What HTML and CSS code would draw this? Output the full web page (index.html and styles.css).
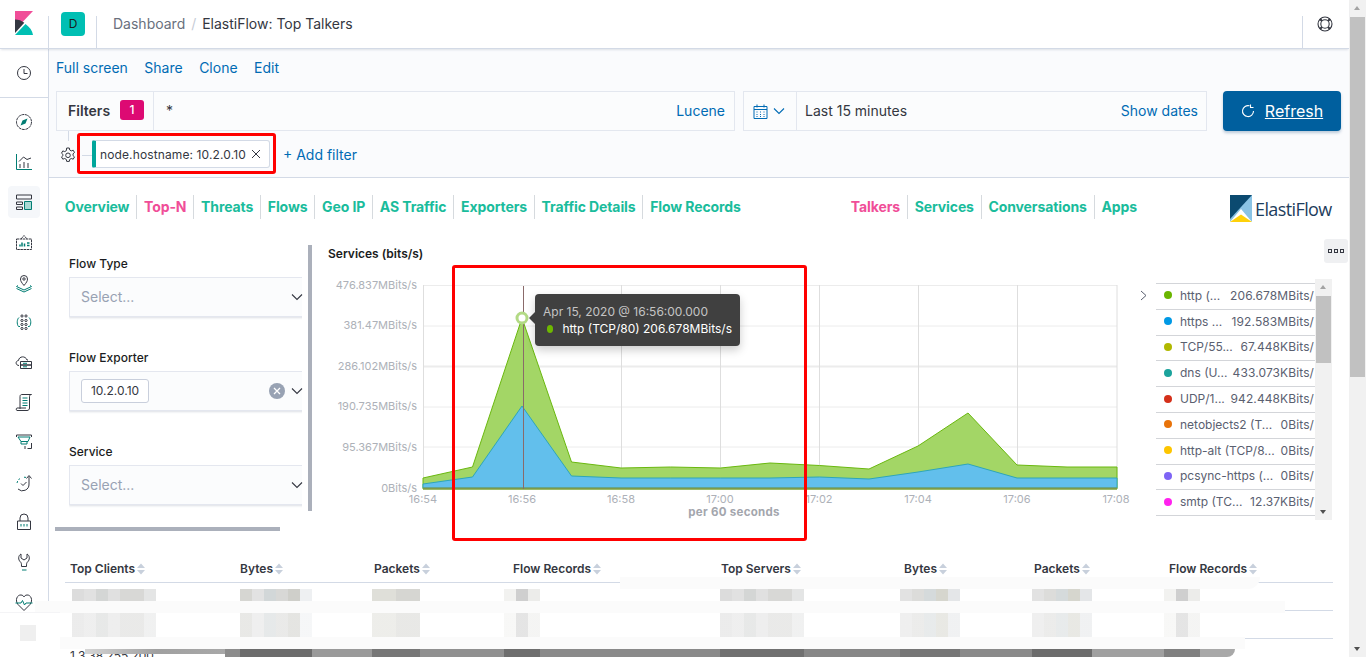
FILE: index.html
```html
<!DOCTYPE html>
<html lang="en">
<head>
    <meta charset="UTF-8">
    <title>ElastiFlow: Top Talkers - Kibana</title>
    <link rel="stylesheet" href="styles.css">
</head>
<body>
<svg class="sprite" width="0" height="0">
    <symbol id="sort" viewBox="0 0 8 12"><path d="M4 0.5 8 5H0Z M0 7H8L4 11.5Z"/></symbol>
    <symbol id="chev" viewBox="0 0 12 8"><path d="M1 1.5 6 6.5 11 1.5" fill="none" stroke="currentColor" stroke-width="1.1"/></symbol>
</svg>

<div class="app">
    <div class="page">
        <header class="topbar">
            <div class="logo-cell">
                <svg width="18" height="24" viewBox="0 0 18 24">
                    <path d="M0 0H18L0 19Z" fill="#f04e98"/>
                    <path d="M0 8.5C3.6 8.5 6.8 9.7 9.3 11.8L0 22Z" fill="#343741"/>
                    <path d="M0 24 10.5 13C14.600 16 17.500 19.700 18 24Z" fill="#00bfb3"/>
                </svg>
            </div>
            <div class="space-cell"><span class="avatar">D</span></div>
            <nav class="crumbs">
                <span class="crumb-first">Dashboard</span>
                <span class="crumb-sep">/</span>
                <span class="crumb-last">ElastiFlow: Top Talkers</span>
            </nav>
            <div class="help-cell">
                <svg width="16" height="16" viewBox="0 0 16 16" fill="none" stroke="#343741" stroke-width="1.100">
                    <circle cx="8" cy="8" r="7"/><circle cx="8" cy="8" r="4.200"/>
                    <path d="M3 3 5 5M13 3 11 5M3 13 5 11M13 13 11 11" stroke-width="2"/>
                </svg>
            </div>
        </header>

        <div class="main">
            <aside class="sidenav">
                <div class="nav-recent">
                    <svg class="nav-icon" viewBox="0 0 24 24"><circle cx="12" cy="12" r="6.500"/><path d="M12 8v4.500h3.500"/></svg>
                </div>
                <div class="nav-list">
                    <span class="nav-item"><svg class="nav-icon" viewBox="0 0 24 24"><circle cx="12" cy="12" r="7.500" stroke-dasharray="3 .6"/><path class="teal-fill" d="M15.500 8.500 13.500 13.500 10.500 10.500Z M8.500 15.500 10.500 10.500 13.500 13.500Z"/></svg></span>
                    <span class="nav-item"><svg class="nav-icon" viewBox="0 0 24 24"><path class="teal" d="M4.500 4v15.500h15.500"/><path d="M7 11.500 11.500 7 15 9.500 19 8M8 18v-4M12 18v-6M16 18v-5"/></svg></span>
                    <span class="nav-item is-active"><svg class="nav-icon" viewBox="0 0 24 24"><path d="M4.500 5h15v4h-15z M4.500 12h6v2.500h-6z M4.500 17h6v2.500h-6z"/><path class="teal-soft" d="M12.500 11.500h7v8h-7z"/></svg></span>
                    <span class="nav-item"><svg class="nav-icon" viewBox="0 0 24 24"><path d="M4.500 9h15v10.500h-15zM9 9l3-3.500L15 9" stroke-dasharray="2.500 .6"/><path class="teal" d="M8 16.500v-2M10 16.500v-4M12.500 16.500v-3M15 13h2.500M15 15.500h2.500" stroke-width="1.500"/></svg></span>
                    <span class="nav-item"><svg class="nav-icon" viewBox="0 0 24 24"><path d="M12 15.500C9.500 12.500 8.500 11 8.500 9a3.500 3.500 0 0 1 7 0c0 2-1 3.500-3.500 6.500z"/><circle cx="12" cy="9" r="1.200"/><path class="teal" d="M6 15.500 4.500 16.500 12 20l7.500-3.500-1.500-1M4.500 18.500 12 22l7.500-3.500"/></svg></span>
                    <span class="nav-item"><svg class="nav-icon" viewBox="0 0 24 24"><circle cx="10" cy="6" r="1.100"/><circle cx="14" cy="6" r="1.100"/><circle cx="10" cy="10.500" r="1.100"/><circle cx="14" cy="10.500" r="1.100"/><circle cx="10" cy="14.500" r="1.100"/><circle cx="14" cy="14.500" r="1.100"/><circle cx="10" cy="18.500" r="1.100"/><circle cx="14" cy="18.500" r="1.100"/><path class="teal" d="M7 7.500C5 9 4.500 14 6.500 16.500l1.500 0M17 7.500c2 1.500 2.500 6.500.5 9l-1.500 0"/></svg></span>
                    <span class="nav-item"><svg class="nav-icon" viewBox="0 0 24 24"><path d="M7 15.500C3.500 15.500 3 11 6.500 10.500 7 6 13.500 5.500 15 10h1"/><path d="M8.500 11.500h11v3.500h-11zM8.500 15h11v3.500h-11z"/><path class="teal" d="M11 13.300h4M11 16.800h4"/></svg></span>
                    <span class="nav-item"><svg class="nav-icon" viewBox="0 0 24 24"><path d="M8 19V6.500C8 5 9 4.500 10 4.500h9.500c-1.500 0-2 1-2 2V18c0 1.500-1 2.500-2.500 2.500H5C4 20.500 4 18 5 18h9"/><path class="teal" d="M10.500 8h5M10.500 10.500h5M10.500 13h5M10.500 15.500h5"/></svg></span>
                    <span class="nav-item"><svg class="nav-icon" viewBox="0 0 24 24"><path d="M4.500 7V5h15v2M19.500 13v5.500h-4"/><path class="teal" d="M6 7h12l-2 4.500H9z"/><path class="teal" d="M9 11.500V14h6v-2.500"/><path d="M13 16v3"/></svg></span>
                    <span class="nav-item"><svg class="nav-icon" viewBox="0 0 24 24"><path d="M17 6.500V14a6.500 6.500 0 0 1-11 5M14.500 8.500 17 5.500 19.500 8.500"/><path class="teal" d="M8 8.500a6.500 6.500 0 0 0-3 5M12 7.200l2 .2" stroke-dasharray="2 1.500"/><path d="M9 13.500l2 2 3.500-3.500"/></svg></span>
                    <span class="nav-item"><svg class="nav-icon" viewBox="0 0 24 24"><path d="M8 11V8a4 4 0 0 1 8 0v3"/><path d="M5.500 11h13v8.500h-13z"/><path class="teal" d="M9 14v2.500M12 14v2.500M15 14v2.500"/></svg></span>
                    <span class="nav-item"><svg class="nav-icon" viewBox="0 0 24 24"><path d="M9 4C6 5.500 6 10 8.500 12c1 1 1 2 1 4.500h5c0-2.500 0-3.500 1-4.500C18 10 18 5.500 15 4v4l-3 2-3-2z"/><path class="teal" d="M10 20h4.500"/></svg></span>
                    <span class="nav-item"><svg class="nav-icon" viewBox="0 0 24 24"><path d="M6 14.500C2.500 10 5.500 4.500 9 5c1.500 0 2.500 1 3 2 .5-1 1.500-2 3-2 3.500-.5 6.500 5 3 9.500L12 20.500z"/><path class="teal" d="M3.500 13H9l1.500-2.500 2 4.500 1.500-2h6.500"/></svg></span>
                </div>
                <div class="nav-collapse">
                    <svg class="nav-icon" viewBox="0 0 24 24"><path d="M10 7h4M10 12h4M7 17h8" stroke="#1a1c21"/></svg>
                </div>
            </aside>

            <div class="content">
                <section class="toolbar">
                    <div class="menu-row">
                        <a>Full screen</a><a>Share</a><a>Clone</a><a>Edit</a>
                    </div>
                    <div class="query-row">
                        <div class="query-bar">
                            <div class="filters-label">Filters <span class="badge">1</span></div>
                            <div class="query-text">*</div>
                            <a class="lucene">Lucene</a>
                        </div>
                        <div class="date-bar">
                            <div class="date-quick">
                                <svg width="15" height="15" viewBox="0 0 15 15" fill="none" stroke="#006bb4"><path d="M1 2.500h13v12H1zM1 5.500h13M4 .5v3M11 .5v3M3.500 8h1M7 8h1M10.500 8h1M3.500 10.500h1M7 10.500h1M10.500 10.500h1M3.500 12.500h1M7 12.500h1M10.500 12.500h1"/></svg>
                                <svg class="date-chev" width="12" height="8"><use href="#chev"/></svg>
                            </div>
                            <div class="date-text">Last 15 minutes</div>
                            <a class="show-dates">Show dates</a>
                        </div>
                        <button class="refresh">
                            <svg width="14" height="14" viewBox="0 0 14 14" fill="none" stroke="#fff" stroke-width="1.100"><path d="M8.500 1.800A5.500 5.500 0 1 0 12.500 7M9.500 .5v3h3"/></svg>
                            <span>Refresh</span>
                        </button>
                    </div>
                    <div class="filter-row">
                        <span class="gear">
                            <svg width="16" height="16" viewBox="0 0 16 16" fill="none" stroke="#343741"><path d="M6.700 1h2.600l.4 2 1.600.9 1.900-.7 1.300 2.300-1.500 1.300v1.800l1.500 1.300-1.300 2.300-1.900-.7-1.600.9-.4 2H6.700l-.4-2-1.600-.9-1.900.7-1.300-2.300 1.500-1.300V7.500L1.500 6.200l1.300-2.300 1.900.7 1.600-.9z"/><circle cx="8" cy="8.300" r="2.300"/></svg>
                        </span>
                        <div class="filter-pill">
                            <span class="pill-text">node.hostname: 10.2.0.10</span>
                            <svg width="10" height="10" viewBox="0 0 10 10" stroke="#343741"><path d="M1 1 9 9M9 1 1 9"/></svg>
                        </div>
                        <a class="add-filter">+ Add filter</a>
                    </div>
                </section>

                <nav class="flow-nav">
                    <div class="flow-links">
                        <a>Overview</a><a class="on">Top-N</a><a>Threats</a><a>Flows</a><a>Geo IP</a><a>AS Traffic</a><a>Exporters</a><a>Traffic Details</a><a>Flow Records</a>
                    </div>
                    <div class="flow-links flow-links-right">
                        <a class="on">Talkers</a><a>Services</a><a>Conversations</a><a>Apps</a>
                    </div>
                    <div class="flow-logo">
                        <svg width="22" height="27" viewBox="0 0 22 27">
                            <path d="M0 0H22V27H0Z" fill="#8ac3e4"/>
                            <path d="M0 0H22L0 24Z" fill="#0b4a70"/>
                            <path d="M11 14 22 27H0Z" fill="#fff"/>
                            <path d="M11 19.500 22 27H0Z" fill="#fed10a"/>
                        </svg>
                        <span>ElastiFlow</span>
                    </div>
                </nav>

                <div class="dash-grid">
                    <div class="controls">
                        <div class="control">
                            <label>Flow Type</label>
                            <div class="select-wrap"><div class="select"><span class="placeholder">Select...</span><svg class="select-chev" width="12" height="8"><use href="#chev"/></svg></div></div>
                        </div>
                        <div class="control">
                            <label>Flow Exporter</label>
                            <div class="select-wrap"><div class="select">
                                <span class="chip">10.2.0.10</span>
                                <span class="clear"><svg width="8" height="8" viewBox="0 0 8 8" stroke="#fff" stroke-width="1.300"><path d="M1 1 7 7M7 1 1 7"/></svg></span>
                                <svg class="select-chev" width="12" height="8"><use href="#chev"/></svg>
                            </div></div>
                        </div>
                        <div class="control">
                            <label>Service</label>
                            <div class="select-wrap"><div class="select"><span class="placeholder">Select...</span><svg class="select-chev" width="12" height="8"><use href="#chev"/></svg></div></div>
                        </div>
                    </div>

                    <div class="chart-panel">
                        <h3 class="chart-title">Services (bits/s)</h3>
                        <button class="panel-menu"><i></i><i></i><i></i></button>
                        <div class="chart-row">
                            <div class="chart">
                                <svg width="822" height="250" viewBox="328 270 822 250">
                                    <g class="grid-h">
                                        <path d="M423 285.500H1117M423 326H1117M423 407H1117M423 447H1117"/>
                                        <path d="M423 366.500H1117" stroke-width="2"/>
                                    </g>
                                    <g class="grid-v">
                                        <path d="M423.500 285V489M621.500 285V489M720.500 285V489M819.500 285V489M918.500 285V489M1017.500 285V489M1117 285V489"/>
                                    </g>
                                    <path class="area-green" d="M423 478 472.500 467 522 318 571.500 462 621 468 670.500 467 720.500 468 770 463 819.500 465.500 869 469 918 446 968 413 1017 465 1067 467 1117 467V489H423Z"/>
                                    <path class="area-blue" d="M423 484 472.500 477 522 406 571.500 476 621 478 670.500 478 720.500 478 770 478 819.500 477 869 479 918 472 968 464 1017 478 1067 478 1117 478V488H423Z"/>
                                    <path class="base-line" d="M423 488.500H1117"/>
                                    <path class="crosshair" d="M523.500 286V489"/>
                                    <circle class="hover-dot" cx="522" cy="318" r="5"/>
                                    <g class="axis-y">
                                        <text x="417" y="289">476.837MBits/s</text>
                                        <text x="417" y="329">381.47MBits/s</text>
                                        <text x="417" y="370">286.102MBits/s</text>
                                        <text x="417" y="410">190.735MBits/s</text>
                                        <text x="417" y="451">95.367MBits/s</text>
                                        <text x="417" y="492">0Bits/s</text>
                                    </g>
                                    <g class="axis-x">
                                        <text x="423" y="503">16:54</text>
                                        <text x="522" y="503">16:56</text>
                                        <text x="621" y="503">16:58</text>
                                        <text x="720" y="503">17:00</text>
                                        <text x="819" y="503">17:02</text>
                                        <text x="918" y="503">17:04</text>
                                        <text x="1017" y="503">17:06</text>
                                        <text x="1116" y="503">17:08</text>
                                    </g>
                                    <text class="axis-name" x="734" y="516">per 60 seconds</text>
                                    <path class="legend-toggle" d="M1141 291 1146 295.500 1141 300"/>
                                </svg>
                                <div class="tooltip">
                                    <div class="tip-time">Apr 15, 2020 @ 16:56:00.000</div>
                                    <div class="tip-value"><span class="tip-dot"></span>http (TCP/80) 206.678MBits/s</div>
                                </div>
                            </div>
                            <div class="legend">
                                <ul class="legend-list">
                                    <li><i class="c1"></i><span>http (...</span><b>206.678MBits/</b></li>
                                    <li><i class="c2"></i><span>https ...</span><b>192.583MBits/</b></li>
                                    <li><i class="c3"></i><span>TCP/55...</span><b>67.448KBits/</b></li>
                                    <li><i class="c4"></i><span>dns (U...</span><b>433.073KBits/</b></li>
                                    <li><i class="c5"></i><span>UDP/1...</span><b>942.448KBits/</b></li>
                                    <li><i class="c6"></i><span>netobjects2 (T...</span><b>0Bits/</b></li>
                                    <li><i class="c7"></i><span>http-alt (TCP/8...</span><b>0Bits/</b></li>
                                    <li><i class="c8"></i><span>pcsync-https (...</span><b>0Bits/</b></li>
                                    <li><i class="c9"></i><span>smtp (TC...</span><b>12.37KBits/</b></li>
                                </ul>
                                <div class="legend-scroll"><span class="arrow-up"></span><span class="legend-thumb"></span><span class="arrow-down"></span></div>
                            </div>
                        </div>
                    </div>
                </div>

                <div class="panel-rule"></div>

                <div class="tables">
                    <table class="flow-table clients">
                        <thead><tr>
                            <th>Top Clients<svg class="sort"><use href="#sort"/></svg></th>
                            <th>Bytes<svg class="sort"><use href="#sort"/></svg></th>
                            <th>Packets<svg class="sort"><use href="#sort"/></svg></th>
                            <th class="th-flow">Flow Records<svg class="sort"><use href="#sort"/></svg></th>
                        </tr></thead>
                        <tbody>
                            <tr><td><span class="mos mos-84 ml-7"></span></td><td><span class="mos mos-72 ml-5"></span></td><td><span class="mos mos-48 ml-3"></span></td><td><span class="mos mos-36 ml-4"></span></td></tr>
                            <tr class="soft"><td><span class="mos mos-84 ml-7"></span></td><td><span class="mos mos-72 ml-5"></span></td><td><span class="mos mos-48 ml-3"></span></td><td><span class="mos mos-36 ml-4"></span></td></tr>
                            <tr class="cut"><td><span class="cut-text">1.3.38.255.200</span></td><td></td><td></td><td></td></tr>
                        </tbody>
                    </table>
                    <table class="flow-table servers">
                        <thead><tr>
                            <th>Top Servers<svg class="sort"><use href="#sort"/></svg></th>
                            <th>Bytes<svg class="sort"><use href="#sort"/></svg></th>
                            <th>Packets<svg class="sort"><use href="#sort"/></svg></th>
                            <th>Flow Records<svg class="sort"><use href="#sort"/></svg></th>
                        </tr></thead>
                        <tbody>
                            <tr><td><span class="mos mos-84 ml-4"></span></td><td><span class="mos mos-60 ml-1"></span></td><td><span class="mos mos-60 ml-3"></span></td><td><span class="mos mos-36"></span></td></tr>
                            <tr class="soft"><td><span class="mos mos-84 ml-4"></span></td><td><span class="mos mos-60 ml-1"></span></td><td><span class="mos mos-60 ml-3"></span></td><td><span class="mos mos-36"></span></td></tr>
                            <tr class="cut"><td></td><td></td><td></td><td></td></tr>
                        </tbody>
                    </table>
                </div>
            </div>
        </div>
    </div>

    <div class="page-scroll"><span class="arrow-up"></span><span class="page-thumb"></span><span class="arrow-down"></span></div>

    <!-- red marks and smears sit on top of the screenshot -->
    <div class="mark mark-filter"></div>
    <div class="mark mark-chart"></div>
    <div class="smear smear-a"></div>
    <div class="smear smear-b"></div>
    <div class="smear smear-c"></div>
    <div class="smear smear-nav"></div>
    <div class="smear-blob"></div>
    <div class="band band-left"></div>
    <div class="band band-main"></div>
</div>
</body>
</html>
```

FILE: styles.css
```css
* {
    box-sizing: border-box;
}

html, body {
    margin: 0;
    height: 657px;
    overflow: hidden;
    background: #fff;
    font-family: Inter, "Noto Sans", sans-serif;
    font-size: 14px;
    color: #343741;
}

a {
    color: #006bb4;
    text-decoration: none;
}

.sprite {
    position: absolute;
}

.app {
    position: relative;
    display: flex;
    width: 1366px;
    height: 657px;
    overflow: hidden;
}

.page {
    width: 1349px;
    flex: none;
}

/* top bar */
.topbar {
    display: flex;
    height: 49px;
    border-bottom: 1px solid #d3dae6;
    box-shadow: 0 2px 2px -1px rgba(152, 162, 179, 0.3);
    position: relative;
    z-index: 2;
    background: #fff;
}

.logo-cell {
    width: 49px;
    padding: 11px 0 0 15px;
    position: relative;
}

.logo-cell svg {
    display: block;
}

.space-cell {
    width: 48px;
    padding: 12px 0 0 12px;
    position: relative;
}

.logo-cell::after,
.space-cell::after {
    content: "";
    position: absolute;
    right: 0;
    top: 16px;
    bottom: 0;
    width: 1px;
    background: #d3dae6;
}

.avatar {
    display: block;
    width: 24px;
    height: 24px;
    line-height: 24px;
    border-radius: 4px;
    background: #00bfb3;
    color: #1a1c21;
    font-size: 12px;
    text-align: center;
}

.crumbs {
    flex: 1;
    padding: 15px 0 0 16px;
    line-height: 18px;
}

.crumb-first {
    color: #69707d;
}

.crumb-sep {
    color: #c6ccd6;
    margin: 0 2px;
}

.help-cell {
    width: 47px;
    margin-top: 16px;
    padding-left: 14px;
    border-left: 1px solid #d3dae6;
}

.help-cell svg {
    display: block;
}

/* layout */
.main {
    display: flex;
    height: 608px;
}

.sidenav {
    width: 49px;
    flex: none;
    border-right: 1px solid #d3dae6;
}

.nav-recent {
    height: 49px;
    border-bottom: 1px solid #d3dae6;
    display: flex;
    align-items: center;
    justify-content: center;
}

.nav-list {
    display: flex;
    flex-direction: column;
    align-items: center;
    gap: 8px;
    padding-top: 8px;
}

.nav-item {
    width: 32px;
    height: 32px;
    display: flex;
    align-items: center;
    justify-content: center;
    border-radius: 4px;
}

.nav-item.is-active {
    background: #f5f7fa;
}

.nav-icon {
    width: 24px;
    height: 24px;
    fill: none;
    stroke: #343741;
    stroke-width: 1;
}

.nav-icon .teal {
    stroke: #017d73;
}

.nav-icon .teal-soft {
    stroke: #017d73;
    fill: #a8d8d4;
}

.nav-icon .teal-fill {
    fill: #017d73;
    stroke: none;
}

.nav-collapse {
    display: flex;
    justify-content: center;
    padding-top: 8px;
}

.content {
    flex: 1;
    min-width: 0;
}

/* toolbar */
.toolbar {
    background: #fafbfd;
    border-bottom: 1px solid #d3dae6;
    height: 129px;
    padding-left: 7px;
}

.menu-row {
    height: 42px;
    padding-top: 10px;
    line-height: 18px;
    display: flex;
    gap: 16.5px;
}

.query-row {
    display: flex;
    height: 40px;
}

.query-bar {
    width: 679px;
    display: flex;
    align-items: center;
    border: 1px solid #e3e7ef;
    background: #fbfcfd;
}

.filters-label {
    width: 97px;
    height: 100%;
    display: flex;
    align-items: center;
    padding: 0 0 2px 11px;
    border-right: 1px solid #e3e7ef;
    font-weight: 600;
    flex: none;
    gap: 10px;
}

.badge {
    width: 24px;
    height: 20px;
    line-height: 20px;
    border-radius: 3px;
    background: #dd0a73;
    color: #fff;
    font-size: 12px;
    font-weight: 500;
    text-align: center;
}

.query-text {
    flex: 1;
    padding: 0 0 2px 12px;
}

.lucene {
    padding: 0 9px 2px 0;
}

.date-bar {
    width: 464px;
    margin-left: 8px;
    display: flex;
    align-items: center;
    border: 1px solid #e3e7ef;
    background: #fbfcfd;
}

.date-quick {
    width: 53px;
    height: 100%;
    display: flex;
    align-items: center;
    padding-left: 9px;
    gap: 5px;
    border-right: 1px solid #e3e7ef;
    flex: none;
}

.date-chev {
    color: #006bb4;
}

.date-text {
    flex: 1;
    padding: 0 0 2px 8px;
}

.show-dates {
    padding: 0 8px 2px 0;
}

.refresh {
    width: 118px;
    margin-left: 16px;
    padding: 0;
    display: flex;
    align-items: center;
    justify-content: center;
    gap: 10px;
    border: none;
    border-radius: 4px;
    background: #005f9e;
    color: #fff;
    font-family: inherit;
    font-size: 16px;
    box-shadow: 0 2px 3px rgba(0, 60, 110, 0.25);
}

.refresh svg {
    flex: none;
}

.refresh span {
    text-decoration: underline;
}

.filter-row {
    display: flex;
    align-items: center;
    height: 46px;
    position: relative;
}

.gear {
    width: 36px;
    padding: 1px 0 0 4px;
    display: flex;
}

.gear::before {
    content: "";
    position: absolute;
    left: 12px;
    top: 0;
    width: 1px;
    height: 10px;
    background: #d3dae6;
}

.gear::after {
    content: "";
    position: absolute;
    left: 26px;
    top: 24px;
    width: 10px;
    height: 1px;
    background: #d3dae6;
}

.filter-pill {
    width: 178px;
    height: 28px;
    display: flex;
    align-items: center;
    justify-content: space-between;
    padding: 0 8px 0 4px;
    background: #fff;
    border: 1px solid #d3dae6;
    border-left: 4px solid #00a69b;
    border-radius: 2px 3px 3px 2px;
    font-size: 12px;
    margin-right: 13px;
}

.pill-text {
    letter-spacing: 0.12px;
    white-space: nowrap;
}

/* elastiflow nav */
.flow-nav {
    height: 67px;
    display: flex;
    padding: 17px 0 0 9px;
}

.flow-links {
    display: flex;
    height: 24px;
    line-height: 24px;
    font-weight: 700;
    font-size: 14px;
}

.flow-links a {
    color: #1abc9c;
    padding: 0 6.8px;
    border-left: 1px solid #d6dade;
    letter-spacing: -0.1px;
    white-space: nowrap;
}

.flow-links a:first-child {
    border-left: none;
}

.flow-links a.on {
    color: #f04e98;
}

.flow-links-right {
    position: absolute;
    left: 844px;
}

.flow-logo {
    position: absolute;
    left: 1230px;
    top: 195px;
    display: flex;
    align-items: center;
    gap: 3px;
    color: #1d3d5c;
    font-family: "Open Sans", sans-serif;
    font-size: 18px;
    letter-spacing: -0.6px;
}

/* controls + chart */
.dash-grid {
    display: flex;
    height: 266px;
}

.controls {
    width: 257px;
    margin-left: 6px;
    padding: 12px 0 0 14px;
    border-right: 4px solid #abb0bb;
    display: flex;
    flex-direction: column;
    gap: 34px;
}

.control label {
    display: block;
    height: 14px;
    line-height: 14px;
    margin-bottom: 6px;
    font-size: 12px;
    font-weight: 500;
    color: #1a1c21;
}

.select-wrap {
    width: 233px;
    overflow: hidden;
    padding-bottom: 4px;
    margin-bottom: -4px;
}

.select {
    width: 240px;
    height: 40px;
    display: flex;
    align-items: center;
    padding-left: 11px;
    background: #fbfcfd;
    border: 1px solid #e4e7ef;
    box-shadow: 0 1px 2px rgba(152, 162, 179, 0.35);
}

.placeholder {
    color: #98a2b3;
    padding-bottom: 2px;
}

.select-chev {
    position: absolute;
    margin-left: 210px;
    color: #343741;
}

.chip {
    width: 68px;
    height: 24px;
    line-height: 22px;
    text-align: center;
    font-size: 12px;
    background: #fff;
    border: 1px solid #c9cfdc;
    border-radius: 3px;
}

.clear {
    width: 16px;
    height: 16px;
    border-radius: 50%;
    background: #98a2b3;
    margin-left: 120px;
    display: flex;
    align-items: center;
    justify-content: center;
}

.chart-panel {
    position: relative;
    flex: 1;
    margin-left: 16px;
    padding-top: 2px;
}

.chart-title {
    margin: 0 0 9px;
    height: 14px;
    line-height: 14px;
    font-size: 12px;
    font-weight: 600;
    color: #1a1c21;
}

.panel-menu {
    position: absolute;
    left: 996px;
    top: -6px;
    width: 24px;
    height: 24px;
    border: none;
    padding: 0;
    background: #eff0f2;
    border-radius: 3px;
    display: flex;
    align-items: center;
    justify-content: center;
    gap: 2px;
}

.panel-menu i {
    width: 4px;
    height: 4px;
    border: 1px solid #343741;
}

.chart-row {
    display: flex;
    gap: 6px;
}

.chart {
    position: relative;
    flex: none;
    width: 822px;
    height: 250px;
}

.chart svg {
    display: block;
}

.grid-h {
    stroke: #ececec;
    fill: none;
}

.grid-v {
    stroke: #dedede;
    fill: none;
}

.area-green {
    fill: #a3d666;
    stroke: #6ab80f;
    stroke-width: 1;
}

.area-blue {
    fill: #62bfec;
    stroke: #2ea6b8;
    stroke-width: 1;
}

.base-line {
    stroke: #7f9a4a;
    stroke-width: 2;
}

.crosshair {
    stroke: #8a6a6a;
}

.hover-dot {
    fill: #fff;
    stroke: #b3da85;
    stroke-width: 3;
}

.axis-y text,
.axis-x text {
    font-size: 11px;
    fill: #adb1b8;
}

.axis-y text {
    text-anchor: end;
}

.axis-x text {
    text-anchor: middle;
}

.axis-name {
    font-size: 11.5px;
    font-weight: 700;
    letter-spacing: 0.3px;
    fill: #a3a6ad;
    text-anchor: middle;
}

.legend-toggle {
    fill: none;
    stroke: #5a6070;
}

.tooltip {
    position: absolute;
    left: 207px;
    top: 24px;
    width: 205px;
    height: 52px;
    padding: 9px 8px 0;
    background: #404040;
    border-radius: 4px;
    box-shadow: 0 4px 10px rgba(0, 0, 0, 0.2);
    font-size: 12px;
    line-height: 17px;
    white-space: nowrap;
}

.tooltip::before {
    content: "";
    position: absolute;
    left: -6px;
    top: 18px;
    border: 6px solid transparent;
    border-left: none;
    border-right-color: #404040;
}

.tip-time {
    color: #c4c4c4;
}

.tip-value {
    display: flex;
    align-items: center;
    color: #fff;
    padding-left: 4px;
}

.tip-dot {
    width: 8px;
    height: 8px;
    border-radius: 50%;
    background: #6eb800;
    margin-right: 9px;
}

.legend {
    display: flex;
    margin-top: 9px;
    width: 176px;
    height: 241px;
    flex: none;
}

.legend-list {
    list-style: none;
    margin: 0;
    padding: 4px 0 0;
    width: 160px;
    border: 0;
}

.legend-list li {
    display: flex;
    align-items: center;
    height: 25.8px;
    padding: 0 1px 2px 8px;
    border-top: 1px solid #d3d5d9;
    font-size: 12px;
    color: #5a6070;
    white-space: nowrap;
}

.legend-list li:last-child {
    border-bottom: 1px solid #d3d5d9;
    height: 26.8px;
}

.legend-list i {
    width: 8px;
    height: 8px;
    border-radius: 50%;
    margin-right: 8px;
    flex: none;
}

.legend-list span {
    flex: 1;
}

.legend-list b {
    font-weight: 400;
    letter-spacing: 0.1px;
}

.c1 { background: #6ab500; }
.c2 { background: #0099e5; }
.c3 { background: #b0b800; }
.c4 { background: #1ba39c; }
.c5 { background: #d4301a; }
.c6 { background: #e8730a; }
.c7 { background: #fdc500; }
.c8 { background: #7e64f5; }
.c9 { background: #ff22ee; }

.legend-scroll,
.page-scroll {
    position: relative;
    background: #f1f1f1;
    flex: none;
}

.legend-scroll {
    width: 17px;
    height: 241px;
}

.page-scroll {
    width: 17px;
    height: 657px;
}

.legend-thumb,
.page-thumb {
    position: absolute;
    left: 1px;
    right: 1px;
    background: #c1c1c1;
}

.legend-thumb {
    top: 17px;
    height: 67px;
}

.page-thumb {
    top: 17px;
    height: 360px;
}

.arrow-up,
.arrow-down {
    position: absolute;
    left: 5px;
    border-left: 3.5px solid transparent;
    border-right: 3.5px solid transparent;
}

.arrow-up {
    top: 6px;
    border-bottom: 4px solid #a3a3a3;
}

.arrow-down {
    bottom: 6px;
    border-top: 4px solid #505050;
}

.panel-rule {
    width: 225px;
    height: 4px;
    margin: 16px 0 0 6px;
    background: #abb0bb;
}

/* tables */
.tables {
    display: flex;
    gap: 96px;
    margin: 24px 0 0 16px;
}

.flow-table {
    border-collapse: collapse;
    table-layout: fixed;
    font-size: 12px;
}

.clients {
    width: 555px;
}

.servers {
    width: 617px;
}

.clients th:nth-child(1) { width: 170px; }
.clients th:nth-child(2) { width: 134px; }
.clients th:nth-child(3) { width: 131px; }

.servers th:nth-child(1) { width: 183px; }
.servers th:nth-child(2) { width: 130px; }
.servers th:nth-child(3) { width: 135px; }

.flow-table th {
    height: 27px;
    padding: 0 0 0 5px;
    text-align: left;
    font-weight: 600;
    color: #343741;
    border-bottom: 1px solid #d3dae6;
    white-space: nowrap;
}

.flow-table th.th-flow {
    padding-left: 13px;
}

.sort {
    width: 8px;
    height: 12px;
    margin-left: 2px;
    vertical-align: -2px;
    fill: #c8d0dc;
}

.flow-table td {
    height: 28px;
    padding: 6px 0 0;
    vertical-align: top;
    border-bottom: 1px solid #d3dae6;
}

.mos {
    display: block;
    height: 12px;
}

.soft td {
    padding-top: 2px;
}

.soft .mos {
    height: 24px;
    opacity: 0.55;
}

.cut td {
    padding-top: 9px;
}

.cut-text {
    margin-left: 5px;
    color: #343741;
}

.ml-1 { margin-left: 1px; }
.ml-3 { margin-left: 3px; }
.ml-4 { margin-left: 4px; }
.ml-5 { margin-left: 5px; }
.ml-7 { margin-left: 7px; }

.mos-84 {
    width: 84px;
    background: linear-gradient(90deg, #dcdcdc 0 12px, #e1e1e1 12px 24px, #d4d6d5 24px 36px, #e0e0e0 36px 48px, #d8d8d6 48px 72px, #e4e5e5 72px 84px);
}

.mos-72 {
    width: 72px;
    background: linear-gradient(90deg, #d6d6d2 0 12px, #e2e2e2 12px 24px, #d2d7d8 24px 36px, #d8d8d6 36px 48px, #cfcfca 48px 60px, #eef0f2 60px 72px);
}

.mos-60 {
    width: 60px;
    background: linear-gradient(90deg, #e2e2e2 0 12px, #dcdcda 12px 24px, #d5dadb 24px 36px, #d6d6ce 36px 48px, #e4e6e8 48px 60px);
}

.mos-48 {
    width: 48px;
    background: linear-gradient(90deg, #dfdfd9 0 24px, #d6d6d2 24px 48px);
}

.mos-36 {
    width: 36px;
    background: linear-gradient(90deg, #f2f2f0 0 12px, #cfcfcf 12px 24px, #ececea 24px 36px);
}

/* overlays: annotation boxes and blur smears */
.mark {
    position: absolute;
    border: 3px solid #f00;
    border-radius: 3px;
    z-index: 6;
}

.mark-filter {
    left: 77px;
    top: 133px;
    width: 199px;
    height: 41px;
}

.mark-chart {
    left: 452px;
    top: 265px;
    width: 355px;
    height: 276px;
}

.smear {
    position: absolute;
    background: #fbfbfb;
    z-index: 4;
}

.smear-a {
    left: 620px;
    top: 577px;
    width: 640px;
    height: 12px;
    border-radius: 0 0 30px 0;
}

.smear-b {
    left: 35px;
    top: 601px;
    width: 1250px;
    height: 12px;
}

.smear-c {
    left: 25px;
    top: 637px;
    width: 1220px;
    height: 12px;
}

.smear-nav {
    left: 0;
    top: 612px;
    width: 60px;
    height: 45px;
    background: #fff;
    border-top: 1px solid #f4f4f6;
}

.smear-blob {
    position: absolute;
    left: 20px;
    top: 625px;
    width: 16px;
    height: 16px;
    background: #efefef;
    z-index: 4;
}

.band {
    position: absolute;
    z-index: 4;
}

.band-left {
    left: 85px;
    top: 649px;
    width: 142px;
    height: 5px;
    background: linear-gradient(90deg, #d5d5d5, #a0a0a0 50%, #a8a8a8);
}

.band-main {
    left: 225px;
    top: 649px;
    width: 1010px;
    height: 8px;
    border-radius: 0 0 12px 0;
    background: linear-gradient(90deg, #8c8c8c 0 15px, #6c6c6c 15px 87px, #9a9a9a 87px 147px, #777 147px 195px, #909090 195px 279px, #6e6e6e 279px 315px, #8a8a8a 315px 495px, #707070 495px 579px, #878787 579px 675px, #767676 675px 735px, #8a8a8a 735px 807px, #6c6c6c 807px 867px, #a0a0a0 867px 939px, #808080 939px 975px, #a8a8a8 975px);
}
```
